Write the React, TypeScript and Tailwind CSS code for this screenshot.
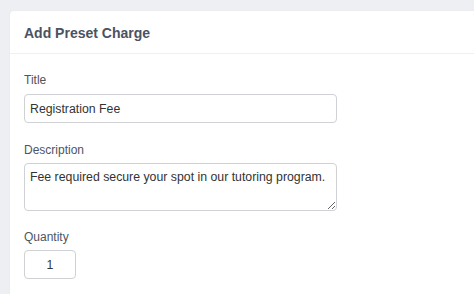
export default function App() {
  return (
    <div
      className="h-[294px] bg-[#edeff2] pl-[10px] pt-[11px] overflow-hidden"
      style={{ fontFamily: '"Liberation Sans", Arial, sans-serif' }}
    >
      <div className="w-[600px] h-[300px] rounded-tl-[4px] bg-white shadow-[0_0_2px_rgba(0,0,0,0.06)]">
        <div className="h-[43px] border-b border-[#eef0f2] pl-[14px] flex items-center">
          <h2 className="text-[14px] font-bold text-[#4b5262] leading-none mt-[1px]">Add Preset Charge</h2>
        </div>

        <div className="pl-[14px] pt-[18px] flex flex-col">
          <label className="text-[12px] leading-[16px] text-[#4f545e]">Title</label>
          <input
            defaultValue="Registration Fee"
            className="mt-[6px] w-[313px] h-[29px] rounded-[4px] border border-[#cfd1d4] px-[5px] text-[12.3px] text-[#333] outline-none"
          />

          <label className="mt-[19px] text-[12px] leading-[16px] text-[#4f545e]">Description</label>
          <textarea
            defaultValue="Fee required secure your spot in our tutoring program."
            className="mt-[5px] w-[313px] h-[48px] rounded-[4px] border border-[#cfd1d4] px-[5px] pt-[6px] text-[12.3px] leading-[15px] text-[#333] outline-none"
          />

          <label className="mt-[18px] text-[12px] leading-[16px] text-[#4f545e]">Quantity</label>
          <input
            defaultValue="1"
            className="mt-[5px] w-[52px] h-[29px] rounded-[4px] border border-[#cfd1d4] text-center text-[12.3px] text-[#333] outline-none"
          />
        </div>
      </div>
    </div>
  );
}
